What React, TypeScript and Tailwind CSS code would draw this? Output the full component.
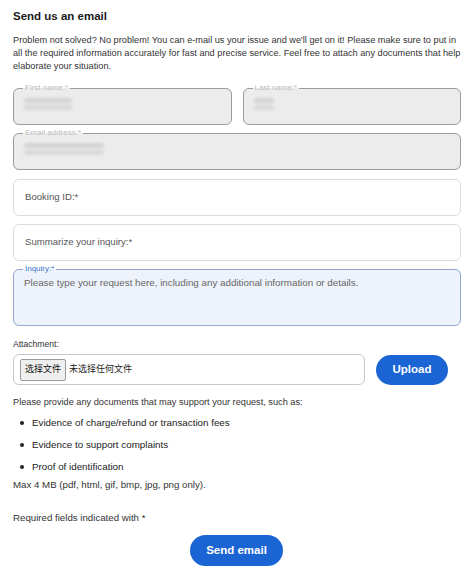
import React from "react";

const font = { fontFamily: '"Liberation Sans", Arial, "Noto Sans CJK SC", sans-serif' };

function Blur({ w }: { w: number }) {
  return (
    <div className="flex flex-col gap-[2px] blur-[1.5px]" style={{ width: w }}>
      <div className="h-[5px] bg-[#d2d2d2] rounded-sm w-full" />
      <div className="h-[5px] bg-[#d8d8d8] rounded-sm w-full" />
    </div>
  );
}

function Filled({ label, w }: { label: string; w: number }) {
  return (
    <fieldset className="h-[43px] border border-[#9c9c9c] rounded-[6px] bg-[#ececec] px-[8px]">
      <legend className="text-[8px] leading-[12px] text-[#bdbdbd] px-[2px] ml-[1px]">{label}</legend>
      <div className="pt-[4px] pl-[2px]">
        <Blur w={w} />
      </div>
    </fieldset>
  );
}

export default function App() {
  return (
    <div className="w-[474px] bg-white text-[#222] px-[13px] pt-[9px] pb-[11px]" style={font}>
      <h1 className="text-[11.5px] leading-[15px] font-bold text-[#1a1a1a]">Send us an email</h1>
      <p className="mt-[10px] text-[9.2px] leading-[13px] text-[#333]">
        Problem not solved? No problem! You can e-mail us your issue and we'll get on it! Please make sure to put in all the required information accurately for fast and precise service. Feel free to attach any documents that help elaborate your situation.
      </p>

      <div className="mt-[9px] grid grid-cols-2 gap-[11px]">
        <Filled label="First name:*" w={48} />
        <Filled label="Last name:*" w={20} />
      </div>

      <div className="mt-[2px]">
        <Filled label="Email address:*" w={80} />
      </div>

      <div className="mt-[9px] h-[37px] border border-[#dcdcdc] rounded-[6px] flex items-center px-[11px] text-[9.6px] text-[#555]">
        Booking ID:*
      </div>
      <div className="mt-[8px] h-[37px] border border-[#dcdcdc] rounded-[6px] flex items-center px-[11px] text-[9.6px] text-[#555]">
        Summarize your inquiry:*
      </div>

      <fieldset className="mt-[2px] h-[63px] border border-[#8fa9cf] rounded-[6px] bg-[#eef3fb] px-[8px]">
        <legend className="text-[8px] leading-[12px] text-[#3b73c8] px-[2px] ml-[1px]">Inquiry:*</legend>
        <div className="text-[9.8px] leading-[14px] text-[#666] pl-[2px] mt-[1px]">
          Please type your request here, including any additional information or details.
        </div>
      </fieldset>

      <div className="mt-[12px] text-[8.6px] leading-[12px] text-[#333]">Attachment:</div>

      <div className="mt-[4px] flex items-center">
        <div className="w-[352px] h-[31px] border border-[#c8c8c8] rounded-[6px] flex items-center px-[6px] gap-[3px]">
          <span className="h-[22px] px-[4px] flex items-center border border-[#9a9a9a] bg-[#efefef] rounded-[2px] text-[9px] text-[#111]">选择文件</span>
          <span className="text-[9px] text-[#222]">未选择任何文件</span>
        </div>
        <button className="ml-[11px] w-[72px] h-[30px] rounded-full bg-[#1b64d4] text-white font-bold text-[11.5px]">Upload</button>
      </div>

      <p className="mt-[11px] text-[9.2px] leading-[13px] text-[#333]">
        Please provide any documents that may support your request, such as:
      </p>
      <ul className="mt-[3px] text-[9.8px] leading-[22px] text-[#222]">
        {["Evidence of charge/refund or transaction fees", "Evidence to support complaints", "Proof of identification"].map((t) => (
          <li key={t} className="flex items-center">
            <span className="w-[4px] h-[4px] rounded-full bg-[#222] ml-[7px] mr-[8px]" />
            {t}
          </li>
        ))}
      </ul>
      <p className="mt-0 text-[9.7px] leading-[13px] text-[#333]">Max 4 MB (pdf, html, gif, bmp, jpg, png only).</p>

      <p className="mt-[20px] text-[9.7px] leading-[13px] text-[#333]">Required fields indicated with *</p>

      <div className="mt-[11px] flex justify-center">
        <button className="w-[93px] h-[31px] rounded-full bg-[#1b64d4] text-white font-bold text-[11.5px] ml-[-1px]">Send email</button>
      </div>
    </div>
  );
}
